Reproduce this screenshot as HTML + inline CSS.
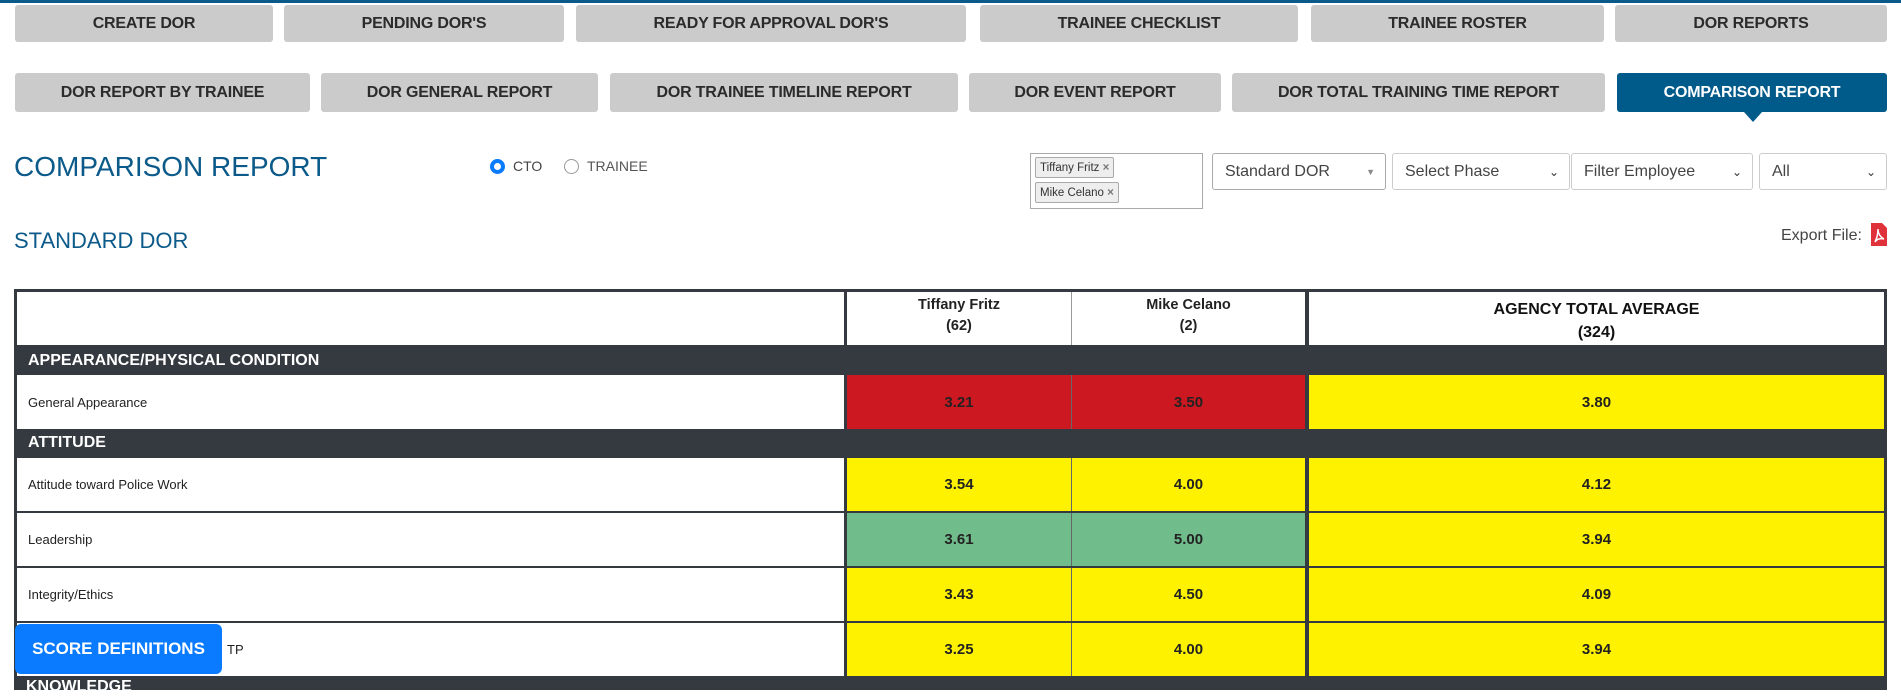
<!DOCTYPE html>
<html><head><meta charset="utf-8"><style>
*{box-sizing:border-box;margin:0;padding:0}
body{width:1901px;height:690px;overflow:hidden;background:#fff;font-family:"Liberation Sans",Arial,sans-serif;position:relative}
.a{position:absolute}
.btn{position:absolute;background:#cbcbcb;border-radius:3px;color:#2b2b2b;font-weight:bold;font-size:16px;display:flex;align-items:center;justify-content:center;letter-spacing:-0.2px}
.sel{position:absolute;border:1px solid #ccc;border-radius:3px;background:#fff;font-size:16px;color:#444;padding-left:12px;display:flex;align-items:center}
.sel .ch{position:absolute;right:10px;top:50%;transform:translateY(-50%);font-size:12px;color:#333}
.cell{position:absolute;display:flex;align-items:center;justify-content:center;font-weight:bold;font-size:15px;color:#222}
.lab{position:absolute;display:flex;align-items:center;padding-left:11px;font-size:13px;color:#222;background:#fff}
.cat{position:absolute;background:#343a40;color:#fff;font-weight:bold;font-size:16px;display:flex;align-items:center;padding-left:11px}
.tag{position:absolute;background:#eee;border:1px solid #aaa;border-radius:2px;font-size:11.5px;color:#333;padding:1px 4px;height:21px;display:flex;align-items:center}
.vl{position:absolute;left:1071px;width:1px;background:#666}
</style></head><body>
<div class="a" style="left:0;top:0;width:1901px;height:3px;background:#0b5a8a"></div>

<div class="btn" style="left:15px;top:5px;width:258px;height:37px">CREATE DOR</div>
<div class="btn" style="left:284px;top:5px;width:280px;height:37px">PENDING DOR'S</div>
<div class="btn" style="left:576px;top:5px;width:390px;height:37px">READY FOR APPROVAL DOR'S</div>
<div class="btn" style="left:980px;top:5px;width:318px;height:37px">TRAINEE CHECKLIST</div>
<div class="btn" style="left:1311px;top:5px;width:293px;height:37px">TRAINEE ROSTER</div>
<div class="btn" style="left:1615px;top:5px;width:272px;height:37px">DOR REPORTS</div>

<div class="btn" style="left:15px;top:73px;width:295px;height:39px">DOR REPORT BY TRAINEE</div>
<div class="btn" style="left:321px;top:73px;width:277px;height:39px">DOR GENERAL REPORT</div>
<div class="btn" style="left:610px;top:73px;width:348px;height:39px">DOR TRAINEE TIMELINE REPORT</div>
<div class="btn" style="left:969px;top:73px;width:252px;height:39px">DOR EVENT REPORT</div>
<div class="btn" style="left:1232px;top:73px;width:373px;height:39px">DOR TOTAL TRAINING TIME REPORT</div>
<div class="btn" style="left:1617px;top:73px;width:270px;height:39px;background:#005a8a;color:#fff">COMPARISON REPORT</div>
<div class="a" style="left:1744px;top:112px;width:0;height:0;border-left:9px solid transparent;border-right:9px solid transparent;border-top:10px solid #005a8a"></div>

<div class="a" style="left:14px;top:151px;font-size:28px;color:#0b5a8a">COMPARISON REPORT</div>
<div class="a" style="left:490px;top:159px;width:15px;height:15px;border-radius:50%;border:4px solid #0a7bff;background:#fff"></div>
<div class="a" style="left:513px;top:158px;font-size:14px;color:#444">CTO</div>
<div class="a" style="left:564px;top:159px;width:15px;height:15px;border-radius:50%;border:1px solid #999;background:#fff"></div>
<div class="a" style="left:587px;top:158px;font-size:14px;color:#555">TRAINEE</div>

<div class="a" style="left:1030px;top:153px;width:173px;height:56px;border:1px solid #aaa"></div>
<div class="tag" style="left:1035px;top:157px">Tiffany Fritz&nbsp;<b style="color:#777">×</b></div>
<div class="tag" style="left:1035px;top:182px">Mike Celano&nbsp;<b style="color:#777">×</b></div>

<div class="sel" style="left:1212px;top:153px;width:174px;height:37px;border-color:#aaa">Standard DOR<span class="ch" style="font-size:9px;color:#888">▼</span></div>
<div class="sel" style="left:1392px;top:153px;width:178px;height:37px">Select Phase<span class="ch">⌄</span></div>
<div class="sel" style="left:1571px;top:153px;width:182px;height:37px">Filter Employee<span class="ch">⌄</span></div>
<div class="sel" style="left:1759px;top:153px;width:128px;height:37px">All<span class="ch">⌄</span></div>

<div class="a" style="left:14px;top:228px;font-size:22px;color:#0b5a8a">STANDARD DOR</div>
<div class="a" style="left:1781px;top:227px;font-size:16px;color:#444">Export File:</div>
<svg class="a" style="left:1870px;top:223px" width="17" height="23" viewBox="0 0 17 23"><path d="M1 0h11l5 5v18H1z" fill="#e0323a"/><path d="M5 19c2-4 3-9 3-13 0 4 2 8 6 10-4-1-7 0-9 3z" fill="none" stroke="#fff" stroke-width="1.5"/></svg>

<!-- table -->
<div class="a" style="left:14px;top:289px;width:1873px;height:401px;background:#343a40"></div>
<div class="a" style="left:17px;top:292px;width:827px;height:53px;background:#fff"></div>
<div class="a" style="left:847px;top:292px;width:224px;height:53px;background:#fff;text-align:center;font-weight:bold;font-size:14.5px;color:#222;padding-top:3px;line-height:21px">Tiffany Fritz<br>(62)</div>
<div class="a" style="left:1072px;top:292px;width:233px;height:53px;background:#fff;text-align:center;font-weight:bold;font-size:14.5px;color:#222;padding-top:3px;line-height:21px">Mike Celano<br>(2)</div>
<div class="vl" style="top:292px;height:53px;background:#999"></div>
<div class="a" style="left:1309px;top:292px;width:575px;height:53px;background:#fff;text-align:center;font-weight:bold;font-size:16px;color:#111;padding-top:6px;line-height:23px">AGENCY TOTAL AVERAGE<br>(324)</div>

<div class="cat" style="left:17px;top:346px;width:827px;height:29px">APPEARANCE/PHYSICAL CONDITION</div>
<div class="lab" style="left:17px;top:375px;width:827px;height:54px">General Appearance</div>
<div class="cell" style="left:847px;top:375px;width:224px;height:54px;background:#cc1820">3.21</div>
<div class="cell" style="left:1072px;top:375px;width:233px;height:54px;background:#cc1820">3.50</div>
<div class="cell" style="left:1309px;top:375px;width:575px;height:54px;background:#fff200">3.80</div>
<div class="vl" style="top:375px;height:54px"></div>

<div class="cat" style="left:17px;top:429px;width:827px;height:28px">ATTITUDE</div>

<div class="lab" style="left:17px;top:458px;width:827px;height:53px">Attitude toward Police Work</div>
<div class="cell" style="left:847px;top:458px;width:224px;height:53px;background:#fff200">3.54</div>
<div class="cell" style="left:1072px;top:458px;width:233px;height:53px;background:#fff200">4.00</div>
<div class="cell" style="left:1309px;top:458px;width:575px;height:53px;background:#fff200">4.12</div>

<div class="lab" style="left:17px;top:513px;width:827px;height:53px">Leadership</div>
<div class="cell" style="left:847px;top:513px;width:224px;height:53px;background:#70bc8a">3.61</div>
<div class="cell" style="left:1072px;top:513px;width:233px;height:53px;background:#70bc8a">5.00</div>
<div class="cell" style="left:1309px;top:513px;width:575px;height:53px;background:#fff200">3.94</div>

<div class="lab" style="left:17px;top:568px;width:827px;height:53px">Integrity/Ethics</div>
<div class="cell" style="left:847px;top:568px;width:224px;height:53px;background:#fff200">3.43</div>
<div class="cell" style="left:1072px;top:568px;width:233px;height:53px;background:#fff200">4.50</div>
<div class="cell" style="left:1309px;top:568px;width:575px;height:53px;background:#fff200">4.09</div>

<div class="lab" style="left:17px;top:623px;width:827px;height:53px;padding-left:210px">TP</div>
<div class="cell" style="left:847px;top:623px;width:224px;height:53px;background:#fff200">3.25</div>
<div class="cell" style="left:1072px;top:623px;width:233px;height:53px;background:#fff200">4.00</div>
<div class="cell" style="left:1309px;top:623px;width:575px;height:53px;background:#fff200">3.94</div>
<div class="vl" style="top:458px;height:53px"></div>
<div class="vl" style="top:513px;height:53px"></div>
<div class="vl" style="top:568px;height:53px"></div>
<div class="vl" style="top:623px;height:53px"></div>

<div class="a" style="left:26px;top:678px;color:#fff;font-weight:bold;font-size:16px">KNOWLEDGE</div>

<div class="a" style="left:15px;top:624px;width:207px;height:50px;background:#0a7bff;border-radius:6px;color:#fff;font-weight:bold;font-size:17px;display:flex;align-items:center;justify-content:center;font-family:'Liberation Sans Narrow','Liberation Sans',sans-serif">SCORE DEFINITIONS</div>
</body></html>
